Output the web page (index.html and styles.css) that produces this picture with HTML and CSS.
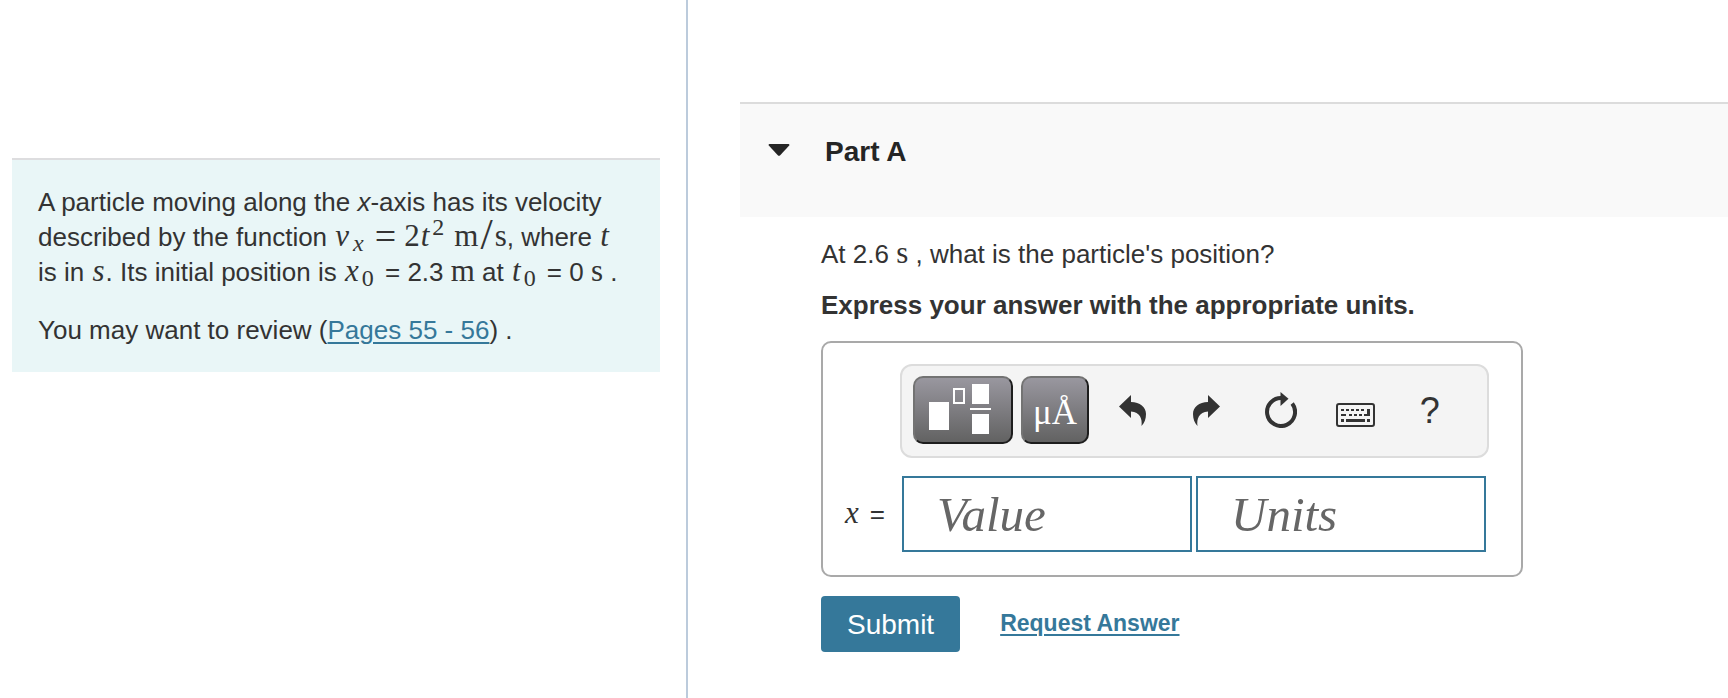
FILE: index.html
```html
<!DOCTYPE html>
<html lang="en">
<head>
<meta charset="utf-8">
<title>Part A</title>
<link rel="stylesheet" href="styles.css">
</head>
<body>
<div class="layout">
  <aside class="side">
    <section class="problem">
      <p>A particle moving along the <i>x</i>-axis has its velocity described by the function <span class="math"><i>v</i><sub><i>x</i></sub><span class="rel">=</span>2<i>t</i><sup>2</sup><span class="unit">m</span><span class="slash">/</span>s</span>, where <i class="math">t</i> is in <i class="math">s</i>. Its initial position is <span class="math"><i>x</i><sub>0</sub></span> = 2.3 <span class="math">m</span> at <span class="math"><i>t</i><sub>0</sub></span> = 0 <span class="math">s</span> .</p>
      <p>You may want to review (<a href="#pages">Pages 55 - 56</a>) .</p>
    </section>
  </aside>
  <main class="main">
    <header class="part">
      <button class="toggle" type="button" aria-label="Collapse Part A">
        <svg width="22" height="12" viewBox="0 0 22 12"><path d="M1.500 0H20.500Q22 .5 21 1.800L12.200 11.200Q11 12.200 9.800 11.200L1 1.800Q0 .5 1.500 0Z" fill="#252525"/></svg>
      </button>
      <h2>Part A</h2>
    </header>
    <form class="question">
      <p>At 2.6 <span class="math">s</span> , what is the particle's position?</p>
      <p class="instruction">Express your answer with the appropriate units.</p>
      <div class="answer">
        <div class="toolbar">
          <button class="key key-wide" type="button" aria-label="Templates">
            <svg width="62" height="50" viewBox="0 0 62 50" fill="#fff"><path d="M0 18H20V46H0Z"/><path d="M25 5H35V19H25Z" fill="none" stroke="#fff" stroke-width="2"/><path d="M43 0H60V20H43ZM41 24H62V26H41ZM43 30H60V50H43Z"/></svg>
          </button>
          <button class="key key-symbols" type="button" aria-label="Symbols">μÅ</button>
          <div class="tools">
            <button class="tool" type="button" aria-label="Undo">
              <svg width="27" height="31" viewBox="0 0 27 31"><path d="M0 11.500L12 0V7C21 7 27 12 27 19C27 24 25.500 28 22.500 31C23.500 24 21 17 12 16.500V23Z"/></svg>
            </button>
            <button class="tool" type="button" aria-label="Redo">
              <svg width="27" height="31" viewBox="0 0 27 31"><path d="M27 11.500L15 0V7C6 7 0 12 0 19C0 24 1.500 28 4.500 31C3.500 24 6 17 15 16.500V23Z"/></svg>
            </button>
            <button class="tool" type="button" aria-label="Reset">
              <svg width="32" height="36" viewBox="0 0 32 36"><path d="M17 6A14 14 0 1 0 27.200 11.500" fill="none" stroke="#333" stroke-width="4"/><path d="M15.500 0L23.500 6.800L15.500 14Z"/></svg>
            </button>
            <button class="tool" type="button" aria-label="Keyboard">
              <svg class="keyboard" width="39" height="24" viewBox="0 0 39 24"><rect x="1" y="1" width="37" height="22" rx="2" fill="none" stroke="#333" stroke-width="2"/><path d="M5 6h3v2h-3zM10 6h3v2h-3zM15 6h3v2h-3zM20 6h3v2h-3zM25 6h3v2h-3zM31 6h3v7h-6v-2h3zM5 11h5v2h-5zM13 11h3v2h-3zM18 11h3v2h-3zM23 11h3v2h-3zM5 16h3v3h-3zM10 16h19v3h-19zM31 16h3v3h-3z"/></svg>
            </button>
            <button class="tool help" type="button" aria-label="Help">?</button>
          </div>
        </div>
        <label class="lhs" for="value"><i class="math">x</i> <span>=</span></label>
        <div class="fields">
          <input id="value" type="text" placeholder="Value">
          <input type="text" placeholder="Units" aria-label="Units">
        </div>
      </div>
      <div class="actions">
        <button class="submit" type="submit">Submit</button>
        <a class="request" href="#answer">Request Answer</a>
      </div>
    </form>
  </main>
</div>
</body>
</html>
```
FILE: styles.css
```css
* {
  box-sizing: border-box;
}

body {
  margin: 0;
  background: #fff;
  color: #333;
  font: 26px/35px "Liberation Sans", Arial, sans-serif;
}

p,
h2 {
  margin: 0;
}

button,
input {
  font: inherit;
  color: inherit;
}

a {
  color: #35789a;
  text-decoration-thickness: 2px;
  text-underline-offset: 3px;
}

.layout {
  display: grid;
  grid-template-columns: 688fr 1040fr;
  min-height: 100vh;
}

.side {
  padding: 158px 26px 0 12px;
  border-right: 2px solid #bccbdc;
}

.problem {
  padding: 25px 36px 24px 26px;
  border-top: 2px solid #dddddf;
  background: #e9f6f7;
}

.problem p + p {
  margin-top: 23px;
}

.math {
  font-family: "Liberation Serif", "Times New Roman", serif;
  font-size: 31px;
  line-height: 1;
}

i.math,
.math i {
  margin: 0 1px;
}

.math sub,
.math sup {
  margin: 0 4px 0 2px;
  font-size: 24px;
  line-height: 0;
}

.math sub {
  vertical-align: -5px;
}

.math sup {
  vertical-align: 11px;
}

.rel {
  margin: 0 8px 0 6px;
  font-size: 38px;
  line-height: 0;
  vertical-align: -3px;
}

.unit {
  margin-left: 6px;
}

.slash {
  margin: 0 2px;
  font-size: 44px;
  line-height: 0;
  vertical-align: -3px;
}

.main {
  padding: 102px 0 40px 52px;
}

.part {
  display: flex;
  align-items: center;
  height: 115px;
  padding: 0 28px 18px;
  border-top: 2px solid #dcdcdc;
  background: #f9f9f9;
  color: #252525;
}

.part h2 {
  margin-left: 35px;
  font-size: 28px;
}

.toggle,
.tool {
  display: flex;
  align-items: center;
  justify-content: center;
  padding: 0;
  border: 0;
  background: none;
}

.toggle {
  padding-bottom: 4px;
}

.question {
  padding: 20px 40px 0 81px;
}

.instruction {
  margin: 16px 0 18px;
  font-weight: bold;
}

.answer {
  display: grid;
  grid-template-columns: 77px minmax(0, 1fr);
  row-gap: 18px;
  align-items: center;
  max-width: 702px;
  padding: 21px 32px 23px 0;
  border: 2px solid #a9a9a9;
  border-radius: 10px;
}

.toolbar {
  display: flex;
  grid-column: 2;
  gap: 8px;
  align-items: center;
  padding: 10px 0 12px 11px;
  border: 2px solid #dcdcdc;
  border-radius: 12px;
  background: #f4f4f4;
}

.key {
  display: flex;
  flex: none;
  align-items: center;
  justify-content: center;
  width: 68px;
  height: 68px;
  padding: 0;
  border: 2px solid;
  border-color: #737373 #1d1d1d #1d1d1d #737373;
  border-radius: 10px;
  background: linear-gradient(#99979f, #626262);
  color: #fff;
  font: 35px/40px "Liberation Serif", "Times New Roman", serif;
}

.key-wide {
  align-items: flex-start;
  justify-content: flex-start;
  width: 100px;
  padding: 6px 0 0 14px;
}

.key-symbols {
  padding-top: 6px;
}

.tools {
  display: grid;
  flex: 1;
  grid-template-columns: repeat(5, 1fr);
  gap: 14px;
  padding: 0 27px 0 5px;
}

.tool {
  height: 68px;
  fill: #333;
}

.keyboard {
  margin-top: 10px;
}

.help {
  font-size: 36px;
}

.lhs {
  display: flex;
  gap: 10px;
  align-items: baseline;
  padding-left: 21px;
}

.fields {
  display: flex;
  gap: 4px;
  padding: 0 3px 0 2px;
}

.fields input {
  flex: 1;
  min-width: 0;
  height: 76px;
  padding: 0 33px;
  border: 2px solid #35789a;
  border-radius: 0;
  background: #fff;
  font: italic 49px "Liberation Serif", "Times New Roman", serif;
}

.fields input::placeholder {
  color: #666;
  opacity: 1;
}

.actions {
  display: flex;
  gap: 40px;
  align-items: center;
  margin-top: 19px;
}

.submit {
  height: 56px;
  padding: 0 26px;
  border: 0;
  border-radius: 4px;
  background: #35789a;
  color: #fff;
  font-size: 28px;
}

.request {
  padding-bottom: 2px;
  font-size: 23px;
  font-weight: bold;
}
```
